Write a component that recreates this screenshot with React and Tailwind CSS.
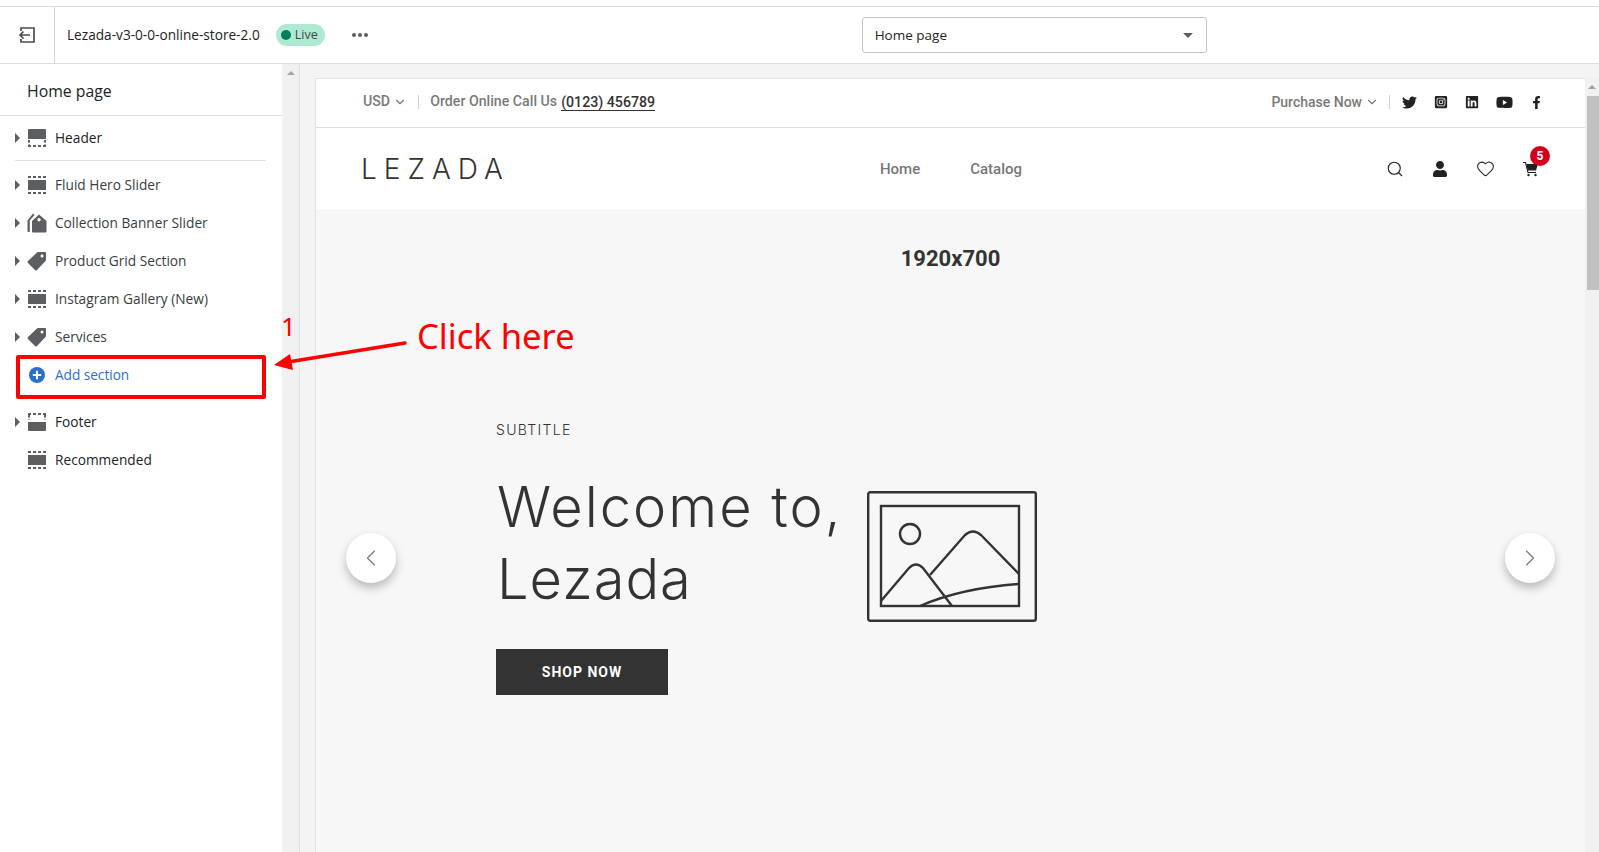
import { ChevronDown, ChevronLeft, ChevronRight, Heart, Search } from 'lucide-react';
import { FaFacebookF, FaInstagramSquare, FaLinkedin, FaTwitter, FaUser, FaYoutube } from 'react-icons/fa';

function SectionIcon({ type }) {
  if (type === 'tag') {
    return (
      <svg width="20" height="20" viewBox="0 0 20 20" className="text-[#5c5f62]">
        <path fill="currentColor" fillRule="evenodd" d="M11 1h7a1 1 0 0 1 1 1v7a1.5 1.5 0 0 1-.5 1L10 19a1.4 1.4 0 0 1-2 0L1 12a1.4 1.4 0 0 1 0-2l9-8.5A1.5 1.5 0 0 1 11 1zm4 2.6a1.5 1.5 0 1 0 0 3 1.5 1.5 0 0 0 0-3z" />
      </svg>
    );
  }
  if (type === 'tags') {
    return (
      <svg width="20" height="20" viewBox="0 0 20 20" className="text-[#5c5f62]">
        <path fill="currentColor" d="M6 0.5 7.5 2 2.8 7.5V19H1.6A1.2 1.2 0 0 1 .5 18V7.5z" />
        <path fill="currentColor" fillRule="evenodd" d="M12 1.5 19.5 8v10.6a1 1 0 0 1-1 1H6a1 1 0 0 1-1-1V8zm0 3.5a1.7 1.7 0 1 0 0 3.4A1.7 1.7 0 0 0 12 5z" />
      </svg>
    );
  }
  const dash = 'currentColor';
  return (
    <svg width="20" height="20" viewBox="0 0 20 20" className="text-[#5c5f62]">
      {type === 'header' && <path fill={dash} d="M2 1h16a1 1 0 0 1 1 1v9H1V2a1 1 0 0 1 1-1z" />}
      {type === 'footer' && <path fill={dash} d="M1 10h18v8a1 1 0 0 1-1 1H2a1 1 0 0 1-1-1z" />}
      {type === 'middle' && <rect x="1" y="5" width="18" height="10" fill={dash} />}
      {type !== 'header' && <path stroke={dash} strokeWidth="2" strokeDasharray="3 2" d="M1 2h18" />}
      {type !== 'footer' && <path stroke={dash} strokeWidth="2" strokeDasharray="3 2" d="M1 18h18" />}
      {type === 'header' && <path stroke={dash} strokeWidth="2" strokeDasharray="2.5 2" d="M2 12v5M18 12v5" />}
      {type === 'footer' && <path stroke={dash} strokeWidth="2" strokeDasharray="2.5 2" d="M2 3v5M18 3v5" />}
      {type === 'middle' && <path stroke={dash} strokeWidth="2" d="M2 1v2M18 1v2M2 17v2M18 17v2" />}
    </svg>
  );
}

function SectionRow({ label, icon, caret = true, dark }) {
  return (
    <div className="flex h-[38px] items-center">
      <div className="flex w-[27px] shrink-0 justify-end pr-[7px]">
        {caret && <span className="h-0 w-0 border-y-[5px] border-l-[5px] border-y-transparent border-l-[#5c5f62]" />}
      </div>
      <SectionIcon type={icon} />
      <span className={`ml-[8px] text-[13.7px] ${dark ? 'text-[#212326]' : 'text-[#3a3d40]'}`}>{label}</span>
    </div>
  );
}

function Sidebar() {
  return (
    <aside className="flex w-[282px] shrink-0 flex-col bg-white font-['Open_Sans',sans-serif]">
      <div className="flex h-[52px] items-center border-b border-[#e1e3e5] pt-[5px] pl-[27px] text-[15.8px] text-[#212326]">Home page</div>
      <div className="flex h-[44px] items-center">
        <SectionRow label="Header" icon="header" dark />
      </div>
      <div className="ml-[15px] mr-[16px] border-t border-[#e1e3e5]" />
      <div className="mt-[5px]">
        <SectionRow label="Fluid Hero Slider" icon="middle" />
        <SectionRow label="Collection Banner Slider" icon="tags" />
        <SectionRow label="Product Grid Section" icon="tag" />
        <SectionRow label="Instagram Gallery (New)" icon="middle" />
        <SectionRow label="Services" icon="tag" />
        <div className="flex h-[38px] items-center pl-[29px]">
          <svg width="16" height="16" viewBox="0 0 16 16">
            <circle cx="8" cy="8" r="8" fill="#2c6ecb" />
            <path d="M8 3.8v8.4M3.8 8h8.4" stroke="#fff" strokeWidth="2" />
          </svg>
          <span className="ml-[10px] text-[13.6px] font-medium text-[#2c6ecb]">Add section</span>
        </div>
      </div>
      <div className="mt-[9px]">
        <SectionRow label="Footer" icon="footer" dark />
        <SectionRow label="Recommended" icon="middle" caret={false} dark />
      </div>
    </aside>
  );
}

function TopBar() {
  return (
    <header className="relative flex h-[58px] shrink-0 items-center border-y border-[#dcdfe2] bg-white font-['Open_Sans',sans-serif]">
      <div className="flex h-full w-[55px] items-center justify-center border-r border-[#d5d8db]">
        <svg width="18" height="18" viewBox="0 0 18 18" fill="none" stroke="#4b4e51" strokeWidth="1.7">
          <path d="M3 5V2h13v14H3v-3" />
          <path d="M12 9H2M5.5 5.5 2 9l3.5 3.5" />
        </svg>
      </div>
      <span className="ml-[12px] text-[13.65px] text-[#212326]">Lezada-v3-0-0-online-store-2.0</span>
      <span className="ml-[16px] flex h-[22px] items-center gap-[4px] rounded-full bg-[#aee9d1] pr-[7px] pl-[5px] text-[12.5px] text-[#44474a]">
        <span className="h-[10px] w-[10px] rounded-full bg-[#007f5f]" />
        Live
      </span>
      <span className="ml-[27px] flex gap-[2px]">
        <span className="h-[4px] w-[4px] rounded-full bg-[#5c5f62]" />
        <span className="h-[4px] w-[4px] rounded-full bg-[#5c5f62]" />
        <span className="h-[4px] w-[4px] rounded-full bg-[#5c5f62]" />
      </span>
      <div className="ml-[494px] flex h-[36px] w-[345px] items-center justify-between rounded-[3px] border border-[#c4c6c9] px-[12px] text-[13.5px] text-[#212326]">
        Home page
        <span className="mr-[1px] h-0 w-0 border-x-[5px] border-t-[5px] border-x-transparent border-t-[#5c5f62]" />
      </div>
    </header>
  );
}

function ScrollUp({ className }) {
  return <span className={`h-0 w-0 border-x-[4px] border-b-[4px] border-x-transparent border-b-[#a3a3a3] ${className}`} />;
}

function PlaceholderImage() {
  return (
    <svg width="170" height="131" viewBox="0 0 170 131" fill="none" stroke="#333" strokeWidth="2.4" className="mt-[20px] shrink-0">
      <rect x="1.2" y="1.2" width="167.6" height="128.6" rx="2" />
      <rect x="14" y="15" width="138" height="100" />
      <circle cx="43" cy="43" r="10" />
      <path d="M14 110 42 77q7-7 14 0l29 38" />
      <path d="M63 84 98 44q8-7 16 0l38 39" />
      <path d="M53 115q42-18 99-22" />
    </svg>
  );
}

function Hero() {
  return (
    <div className="relative flex-1 bg-[#f7f7f7] text-[#333]">
      <div className="pt-[35px] text-center text-[22px] leading-[30px] font-bold">1920x700</div>
      <div className="mt-[146px] pl-[180px]">
        <div className="font-['Inter',sans-serif] text-[14px] leading-[20px] font-light tracking-[1.3px] text-[#333]">SUBTITLE</div>
        <div className="mt-[31px] flex items-start gap-[24px]">
          <h1 className="ml-[1px] font-['Inter',sans-serif] text-[56px] leading-[72px] font-light tracking-[2px]">
            Welcome to,<br /><span className="tracking-[1px]">Lezada</span>
          </h1>
          <PlaceholderImage />
        </div>
        <div className="mt-[27px] flex h-[46px] w-[172px] items-center justify-center bg-[#333] text-[14px] font-bold tracking-[1px] text-white">SHOP NOW</div>
      </div>
      <div className="absolute top-[324px] left-[30px] flex h-[50px] w-[50px] items-center justify-center rounded-full bg-white shadow-[0_5px_10px_rgba(0,0,0,0.25)]">
        <ChevronLeft size={28} strokeWidth={1} className="text-[#777]" />
      </div>
      <div className="absolute top-[324px] right-[30px] flex h-[50px] w-[50px] items-center justify-center rounded-full bg-white shadow-[0_5px_10px_rgba(0,0,0,0.25)]">
        <ChevronRight size={28} strokeWidth={1} className="text-[#777]" />
      </div>
    </div>
  );
}

function CartIcon() {
  return (
    <svg width="16" height="16" viewBox="0 0 16 16" className="text-[#222]">
      <path d="M0 1.5h2.5L5 11.5h8" fill="none" stroke="currentColor" strokeWidth="1.1" />
      <path d="M3.2 3H15l-2 6.5H4.6z" fill="currentColor" />
      <circle cx="5.5" cy="14" r="1.2" fill="currentColor" />
      <circle cx="12.5" cy="14" r="1.2" fill="currentColor" />
    </svg>
  );
}

function Preview() {
  return (
    <div className="flex min-w-0 flex-1 flex-col border-t border-l border-[#e4e4e4] bg-white font-['Roboto',sans-serif]">
      <div className="flex h-[49px] shrink-0 items-center border-b border-[#e0e0e0] pr-[42px] pb-[2px] pl-[47px] text-[14.2px] font-medium text-[#7a7a7a]">
        <span>USD</span>
        <ChevronDown size={14} className="ml-[3px]" />
        <span className="mr-[11px] ml-[11px] h-[14px] border-l border-[#d0d0d0]" />
        <span>Order Online Call Us</span>
        <span className="ml-[4px] border-b border-[#333] leading-[16px] text-[#333]">(0123) 456789</span>
        <span className="ml-auto text-[14px]">Purchase Now</span>
        <ChevronDown size={14} className="ml-[3px]" />
        <span className="mr-[12px] ml-[10px] h-[14px] border-l border-[#d0d0d0]" />
        <div className="flex items-center gap-[17px] text-[#222]">
          <FaTwitter size={15} />
          <FaInstagramSquare size={14} />
          <FaLinkedin size={14} />
          <FaYoutube size={17} />
          <FaFacebookF size={13} />
        </div>
      </div>
      <div className="relative flex h-[81px] shrink-0 items-center bg-white pr-[46px] pl-[45px]">
        <span className="font-['Inter',sans-serif] text-[28px] font-light tracking-[7px] text-[#333]">LEZADA</span>
        <nav className="ml-[370px] flex gap-[50px] pt-[2px] text-[15px] font-medium text-[#777]">
          <span>Home</span>
          <span>Catalog</span>
        </nav>
        <div className="ml-auto flex items-center gap-[28px] text-[#222]">
          <Search size={18} strokeWidth={1.5} />
          <FaUser size={16} />
          <Heart size={19} strokeWidth={1.3} />
          <div className="relative">
            <CartIcon />
            <span className="absolute -top-[15px] left-[7px] flex h-[20px] w-[20px] items-center justify-center rounded-full bg-[#d0021b] text-[12px] font-bold text-white">5</span>
          </div>
        </div>
      </div>
      <Hero />
    </div>
  );
}

function Annotations() {
  return (
    <>
      <div className="absolute top-[355px] left-[16px] h-[44px] w-[250px] rounded-[2px] border-[4px] border-[#ff0000]" />
      <svg className="absolute top-[335px] left-[270px]" width="140" height="40" viewBox="0 0 140 40" fill="none">
        <path d="M135 8 18 27" stroke="#ff0000" strokeWidth="3.5" strokeLinecap="round" />
        <path d="M4 30 20 19l3 16z" fill="#ff0000" />
      </svg>
      <span className="absolute top-[308px] left-[281px] font-['Noto_Sans',sans-serif] text-[26px] leading-[36px] text-[#ff0000]">1</span>
      <span className="absolute top-[312px] left-[417px] font-['Noto_Sans',sans-serif] text-[34.6px] leading-[48px] text-[#ff0000]">Click here</span>
    </>
  );
}

export default function App() {
  return (
    <div className="relative flex h-[852px] w-full flex-col overflow-hidden bg-white">
      <div className="h-[6px] shrink-0 bg-white" />
      <TopBar />
      <div className="flex min-h-0 flex-1">
        <Sidebar />
        <div className="flex w-[18px] shrink-0 justify-center border-r border-[#e2e2e2] bg-[#f1f1f1] pt-[7px]">
          <ScrollUp />
        </div>
        <div className="flex min-w-0 flex-1 bg-[#f4f4f4] pt-[14px] pl-[15px]">
          <Preview />
          <div className="flex w-[14px] shrink-0 flex-col bg-[#f1f1f1]">
            <div className="flex h-[18px] items-center justify-center">
              <ScrollUp />
            </div>
            <div className="ml-[2px] h-[194px] bg-[#c1c1c1]" />
          </div>
        </div>
      </div>
      <Annotations />
    </div>
  );
}
